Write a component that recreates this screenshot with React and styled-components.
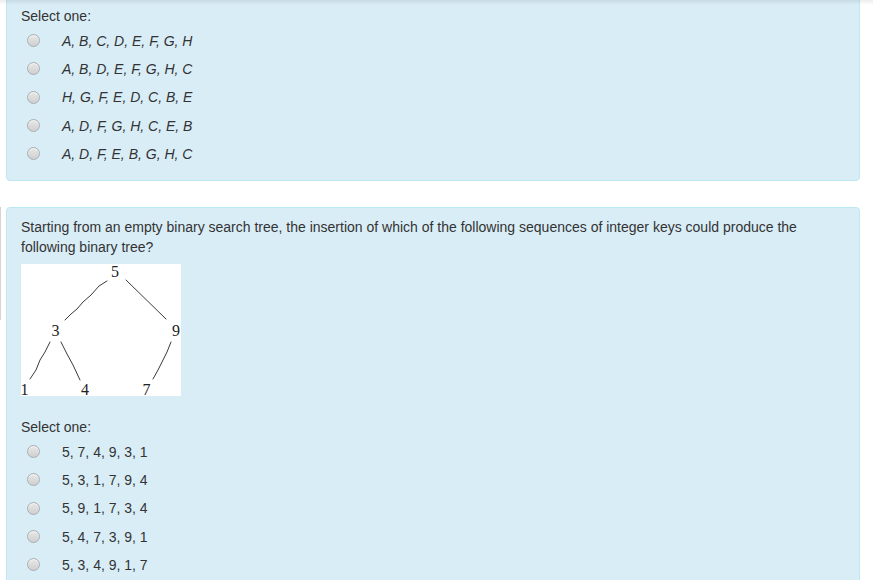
import React from "react";
import styled, { createGlobalStyle } from "styled-components";

const Global = createGlobalStyle`
  html, body { margin: 0; padding: 0; background: #fff; }
  body {
    font-family: "Liberation Sans", Arial, sans-serif;
    font-size: 14px;
    line-height: 20px;
    color: #333;
    overflow: hidden;
  }
`;

const TopShade = styled.div`
  position: fixed;
  left: 0;
  right: 0;
  top: 0;
  height: 5px;
  background: linear-gradient(to bottom, rgba(0, 0, 0, 0.07), rgba(0, 0, 0, 0));
  pointer-events: none;
  z-index: 5;
`;

const Page = styled.div`
  width: 873px;
  display: flex;
  flex-direction: column;
`;

const Row = styled.div`
  display: flex;
  align-items: flex-start;
  margin-top: ${(p) => p.$mt || 0}px;
`;

const Gutter = styled.div`
  width: 6px;
  flex: none;
  display: flex;
  align-self: stretch;
`;

const Rule = styled.div`
  width: 1px;
  height: 113px;
  background: #d4d4d4;
`;

const Panel = styled.div`
  width: 854px;
  box-sizing: border-box;
  background: #d9edf7;
  border: 1px solid #bce8f1;
  border-radius: 4px;
  padding: ${(p) => p.$pt}px 14px ${(p) => p.$pb}px 14px;
  margin-top: ${(p) => p.$mt || 0}px;
`;

const Question = styled.div`
  margin: 0;
`;

const Figure = styled.div`
  margin-top: 7px;
  width: 160px;
  height: 132px;
  background: #fff;
  overflow: hidden;
`;

const Prompt = styled.div`
  margin-top: ${(p) => p.$mt || 0}px;
  height: 20px;
`;

const Options = styled.div`
  display: flex;
  flex-direction: column;
  margin-top: 0.5px;
`;

const Option = styled.label`
  display: flex;
  align-items: center;
  height: 28.3px;
  font-style: ${(p) => (p.$italic ? "italic" : "normal")};
`;

const Radio = styled.span`
  width: 13px;
  height: 13px;
  box-sizing: border-box;
  border-radius: 50%;
  border: 1px solid #a9aeb1;
  background: linear-gradient(to bottom, #e8e8e8 0%, #cfcfcf 100%);
  box-shadow: inset 0 1px 1px rgba(255, 255, 255, 0.6);
  margin-left: 6px;
  margin-right: 22px;
  flex: none;
`;

const TreeSvg = styled.svg`
  display: block;
`;

const Num = ({ x, y, children }) => (
  <text
    x={x}
    y={y}
    fontFamily='"Liberation Serif", "DejaVu Serif", serif'
    fontSize="16"
    fill="#222"
    textAnchor="middle"
  >
    {children}
  </text>
);

const Tree = () => (
  <TreeSvg width="160" height="132" viewBox="0 0 160 132">
    <g stroke="#3a3a3a" strokeWidth="1" fill="none" strokeLinecap="round">
      <path d="M86 17 L78 22 L70 31 L62 38 L56 45 L50 50 L44 56" />
      <path d="M105 16 L145 55" />
      <path d="M29 78 L24 88 L19 96 L15 106 L9 115" />
      <path d="M40 78 L46 90 L52 101 L59 116" />
      <path d="M150 78 L146 88 L141 98 L137 106 L132 115" />
    </g>
    <Num x="94" y="13">5</Num>
    <Num x="34.5" y="72">3</Num>
    <Num x="155" y="72">9</Num>
    <Num x="3.5" y="131">1</Num>
    <Num x="64" y="131">4</Num>
    <Num x="125.5" y="131">7</Num>
  </TreeSvg>
);

const first = [
  "A, B, C, D, E, F, G, H",
  "A, B, D, E, F, G, H, C",
  "H, G, F, E, D, C, B, E",
  "A, D, F, G, H, C, E, B",
  "A, D, F, E, B, G, H, C",
];

const second = [
  "5, 7, 4, 9, 3, 1",
  "5, 3, 1, 7, 9, 4",
  "5, 9, 1, 7, 3, 4",
  "5, 4, 7, 3, 9, 1",
  "5, 3, 4, 9, 1, 7",
];

export default function App() {
  return (
    <>
      <Global />
      <TopShade />
      <Page>
        <Row>
          <Gutter />
          <Panel $pt={9} $pb={12.5} $mt={-4}>
            <Prompt>Select one:</Prompt>
            <Options>
              {first.map((t) => (
                <Option key={t} $italic>
                  <Radio />
                  {t}
                </Option>
              ))}
            </Options>
          </Panel>
        </Row>
        <Row $mt={26}>
          <Gutter>
            <Rule />
          </Gutter>
          <Panel $pt={8.5} $pb={20}>
            <Question>
              Starting from an empty binary search tree, the insertion of which of the following
              sequences of integer keys could produce the following binary tree?
            </Question>
            <Figure>
              <Tree />
            </Figure>
            <Prompt $mt={21}>Select one:</Prompt>
            <Options>
              {second.map((t) => (
                <Option key={t}>
                  <Radio />
                  {t}
                </Option>
              ))}
            </Options>
          </Panel>
        </Row>
      </Page>
    </>
  );
}
